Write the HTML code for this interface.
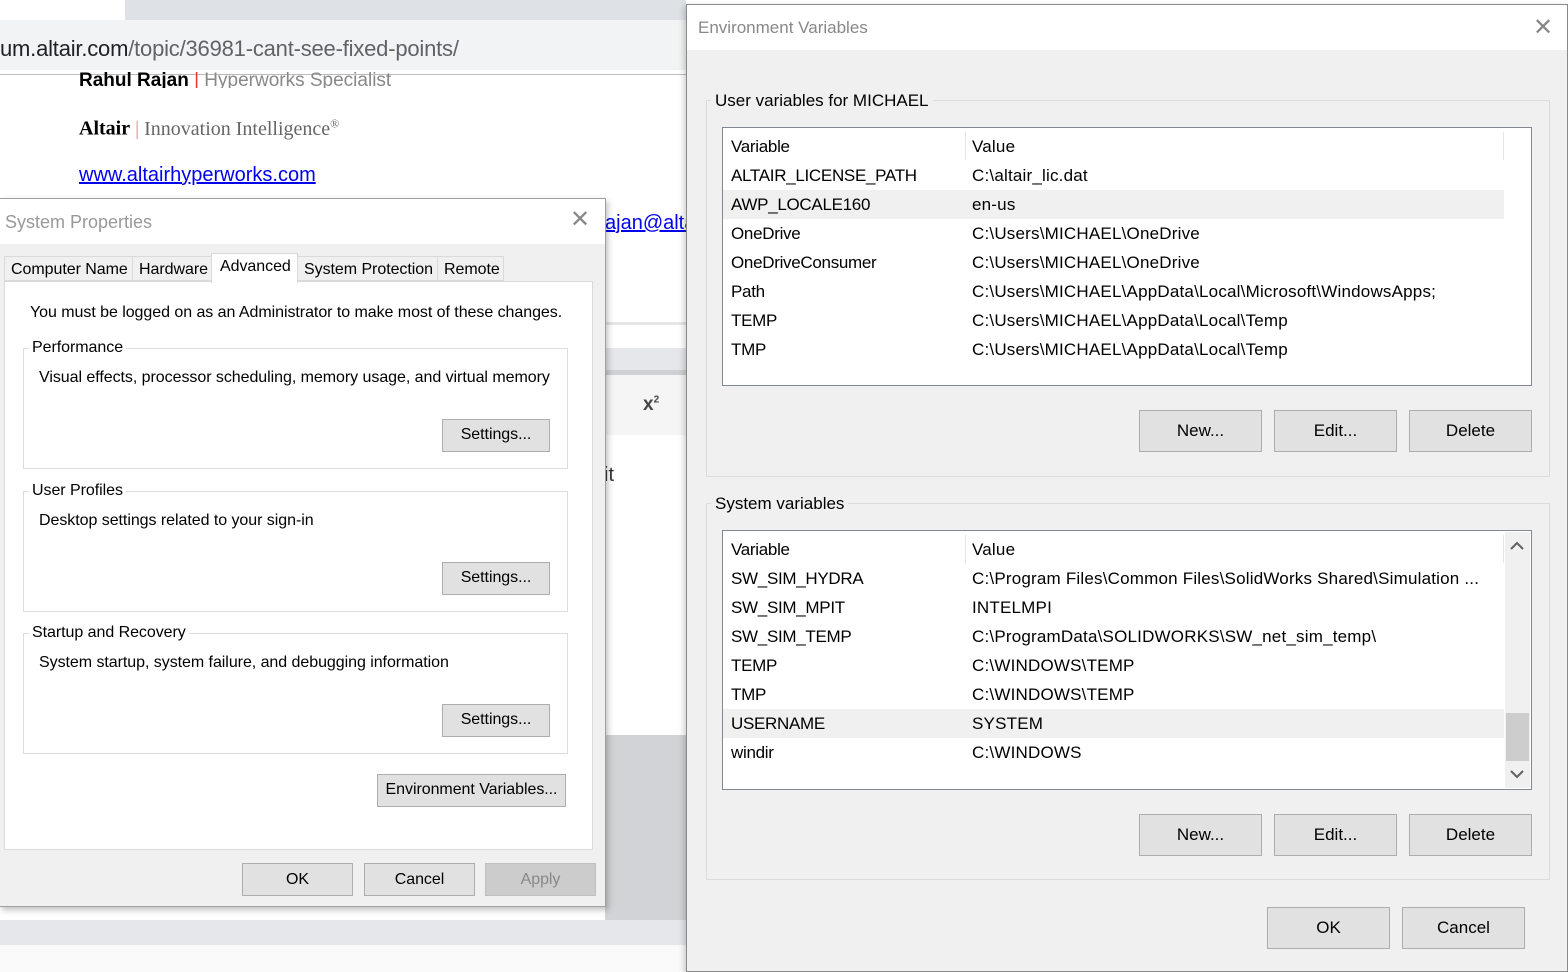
<!DOCTYPE html><html><head><meta charset="utf-8"><style>
*{margin:0;padding:0;box-sizing:border-box}
body{width:1568px;height:972px;position:relative;overflow:hidden;background:#fff;font-family:"Liberation Sans",sans-serif;color:#000}
.a{position:absolute}
.sp{font-size:16px;letter-spacing:-0.05px;white-space:nowrap}
.btn{position:absolute;background:#e1e1e1;border:1px solid #adadad;text-align:center}
.ev{font-size:17px;white-space:nowrap}
.gb{position:absolute;border:1px solid #dcdcdc}
</style></head><body>
<div class="a" style="left:0;top:0;width:686px;height:20px;background:#dee1e6"></div>
<div class="a" style="left:0;top:0;width:125px;height:20px;background:#fff"></div>
<div class="a" style="left:0;top:20px;width:686px;height:50px;background:#f1f3f4"></div>
<div class="a" style="left:0;top:74px;width:686px;height:1px;background:#bbb"></div>
<div class="a" style="left:0;top:36px;font-size:22px;color:#202124;letter-spacing:-0.2px">um.altair.com<span style="color:#5f6368">/topic/36981-cant-see-fixed-points/</span></div>
<div class="a" style="left:79px;top:70px;font-size:19px;font-weight:bold;height:18px;overflow:hidden;line-height:22px">Rahul Rajan <span style="color:#e33;font-weight:normal">|</span> <span style="color:#888;font-weight:normal">Hyperworks Specialist</span></div>
<div class="a" style="left:79px;top:116px;font-family:'Liberation Serif',serif;font-size:20px"><b>Altair</b> <span style="color:#e88">|</span> <span style="color:#666">Innovation Intelligence<sup style="font-size:12px">®</sup></span></div>
<div class="a" style="left:79px;top:164px;font-size:20px;color:#00e;text-decoration:underline">www.altairhyperworks.com</div>
<div class="a" style="left:605px;top:212px;font-size:20px;color:#00e;text-decoration:underline">ajan@alta</div>
<div class="a" style="left:605px;top:322px;width:81px;height:3px;background:#e6e6e6"></div>
<div class="a" style="left:605px;top:348px;width:81px;height:22px;background:#e6e7ea"></div>
<div class="a" style="left:605px;top:370px;width:81px;height:5px;background:#cfd0d3"></div>
<div class="a" style="left:605px;top:375px;width:81px;height:60px;background:#f5f5f5"></div>
<div class="a" style="left:643px;top:394px;font-size:19px;font-weight:bold;color:#444">x<sup style="font-size:10px">2</sup></div>
<div class="a" style="left:604px;top:464px;font-size:20px;color:#333">it</div>
<div class="a" style="left:605px;top:735px;width:81px;height:185px;background:#d2d3d6"></div>
<div class="a" style="left:0;top:920px;width:686px;height:25px;background:#e6e7ea"></div>
<div class="a" style="left:0;top:945px;width:686px;height:27px;background:#fafafa"></div>

<div class="a" style="left:0;top:198px;width:606px;height:709px;background:#f0f0f0;border:1px solid #a0a0a0;border-left:none;box-shadow:2px 3px 6px rgba(0,0,0,.25)">
 <div class="a" style="left:0;top:0;width:605px;height:45px;background:#fff"></div>
 <div class="a" style="left:5px;top:13px;font-size:18px;color:#999">System Properties</div>
 <div class="a" style="left:570px;top:6px;font-size:24px;color:#888">✕</div>
 <div class="a" style="left:4px;top:82px;width:589px;height:569px;background:#fff;border:1px solid #dadada"></div>
 <div class="a sp" style="left:4px;top:57px;width:129px;height:25px;border:1px solid #dadada;background:#f0f0f0;padding:4px 0 0 6px">Computer Name</div>
 <div class="a sp" style="left:132px;top:57px;width:80px;height:25px;border:1px solid #dadada;background:#f0f0f0;padding:4px 0 0 6px">Hardware</div>
 <div class="a sp" style="left:211px;top:54px;width:87px;height:30px;border:1px solid #dadada;border-bottom:none;background:#fff;padding:4px 0 0 8px">Advanced</div>
 <div class="a sp" style="left:297px;top:57px;width:141px;height:25px;border:1px solid #dadada;background:#f0f0f0;padding:4px 0 0 6px">System Protection</div>
 <div class="a sp" style="left:437px;top:57px;width:67px;height:25px;border:1px solid #dadada;background:#f0f0f0;padding:4px 0 0 6px">Remote</div>
 <div class="a sp" style="left:30px;top:105px">You must be logged on as an Administrator to make most of these changes.</div>

 <div class="gb" style="left:23px;top:149px;width:545px;height:121px"></div>
 <div class="a sp" style="left:29px;top:140px;background:#fff;padding:0 3px">Performance</div>
 <div class="a sp" style="left:39px;top:170px">Visual effects, processor scheduling, memory usage, and virtual memory</div>
 <div class="btn sp" style="left:442px;top:220px;width:108px;height:33px;padding-top:6px">Settings...</div>

 <div class="gb" style="left:23px;top:292px;width:545px;height:121px"></div>
 <div class="a sp" style="left:29px;top:283px;background:#fff;padding:0 3px">User Profiles</div>
 <div class="a sp" style="left:39px;top:313px">Desktop settings related to your sign-in</div>
 <div class="btn sp" style="left:442px;top:363px;width:108px;height:33px;padding-top:6px">Settings...</div>

 <div class="gb" style="left:23px;top:434px;width:545px;height:121px"></div>
 <div class="a sp" style="left:29px;top:425px;background:#fff;padding:0 3px">Startup and Recovery</div>
 <div class="a sp" style="left:39px;top:455px">System startup, system failure, and debugging information</div>
 <div class="btn sp" style="left:442px;top:505px;width:108px;height:33px;padding-top:6px">Settings...</div>

 <div class="btn sp" style="left:377px;top:575px;width:189px;height:33px;padding-top:6px">Environment Variables...</div>
 <div class="btn sp" style="left:242px;top:664px;width:111px;height:33px;padding-top:7px">OK</div>
 <div class="btn sp" style="left:364px;top:664px;width:111px;height:33px;padding-top:7px">Cancel</div>
 <div class="btn sp" style="left:485px;top:664px;width:111px;height:33px;padding-top:7px;background:#ccc;border-color:#bfbfbf;color:#888">Apply</div>
</div>

<div class="a" style="left:686px;top:4px;width:882px;height:968px;background:#f0f0f0;border:1px solid #8a8a8a;box-shadow:-2px 2px 6px rgba(0,0,0,.2)">
 <div class="a" style="left:0;top:0;width:880px;height:45px;background:#fff"></div>
 <div class="a ev" style="left:11px;top:13px;color:#888">Environment Variables</div>
 <div class="a" style="left:846px;top:8px;font-size:24px;color:#888">✕</div>

 <div class="gb" style="left:19px;top:95px;width:844px;height:377px"></div>
 <div class="a ev" style="left:24px;top:86px;background:#f0f0f0;padding:0 4px">User variables for MICHAEL</div>
 <div class="a" style="left:35px;top:122px;width:810px;height:259px;background:#fff;border:1px solid #828790">
  <div class="a" style="left:242px;top:4px;width:1px;height:28px;background:#e5e5e5"></div>
  <div class="a" style="left:780px;top:4px;width:1px;height:28px;background:#e5e5e5"></div>
  <div class="a" style="left:0;top:62px;width:781px;height:29px;background:#f0f0f0"></div>
 </div>
 <div class="a ev" style="left:44px;top:127px;line-height:29px;letter-spacing:-0.3px">Variable<br>ALTAIR_LICENSE_PATH<br>AWP_LOCALE160<br>OneDrive<br>OneDriveConsumer<br>Path<br>TEMP<br>TMP</div>
 <div class="a ev" style="left:285px;top:127px;line-height:29px;letter-spacing:0.2px">Value<br>C:\altair_lic.dat<br>en-us<br>C:\Users\MICHAEL\OneDrive<br>C:\Users\MICHAEL\OneDrive<br>C:\Users\MICHAEL\AppData\Local\Microsoft\WindowsApps;<br>C:\Users\MICHAEL\AppData\Local\Temp<br>C:\Users\MICHAEL\AppData\Local\Temp</div>
 <div class="btn ev" style="left:452px;top:405px;width:123px;height:42px;padding-top:10px">New...</div>
 <div class="btn ev" style="left:587px;top:405px;width:123px;height:42px;padding-top:10px">Edit...</div>
 <div class="btn ev" style="left:722px;top:405px;width:123px;height:42px;padding-top:10px">Delete</div>

 <div class="gb" style="left:19px;top:498px;width:844px;height:377px"></div>
 <div class="a ev" style="left:24px;top:489px;background:#f0f0f0;padding:0 4px">System variables</div>
 <div class="a" style="left:35px;top:525px;width:810px;height:260px;background:#fff;border:1px solid #828790">
  <div class="a" style="left:242px;top:4px;width:1px;height:28px;background:#e5e5e5"></div>
  <div class="a" style="left:780px;top:4px;width:1px;height:28px;background:#e5e5e5"></div>
  <div class="a" style="left:0;top:178px;width:781px;height:29px;background:#f0f0f0"></div>
  <div class="a" style="left:782px;top:1px;width:25px;height:256px;background:#f0f0f0"></div>
  <div class="a" style="left:783px;top:182px;width:23px;height:48px;background:#cdcdcd"></div>
  <svg class="a" style="left:786px;top:10px" width="16" height="10"><path d="M2 8 L8 2 L14 8" stroke="#606060" stroke-width="2" fill="none"/></svg>
  <svg class="a" style="left:786px;top:238px" width="16" height="10"><path d="M2 2 L8 8 L14 2" stroke="#606060" stroke-width="2" fill="none"/></svg>
 </div>
 <div class="a ev" style="left:44px;top:530px;line-height:29px;letter-spacing:-0.3px">Variable<br>SW_SIM_HYDRA<br>SW_SIM_MPIT<br>SW_SIM_TEMP<br>TEMP<br>TMP<br>USERNAME<br>windir</div>
 <div class="a ev" style="left:285px;top:530px;line-height:29px;letter-spacing:0.2px">Value<br>C:\Program Files\Common Files\SolidWorks Shared\Simulation ...<br>INTELMPI<br>C:\ProgramData\SOLIDWORKS\SW_net_sim_temp\<br>C:\WINDOWS\TEMP<br>C:\WINDOWS\TEMP<br>SYSTEM<br>C:\WINDOWS</div>
 <div class="btn ev" style="left:452px;top:809px;width:123px;height:42px;padding-top:10px">New...</div>
 <div class="btn ev" style="left:587px;top:809px;width:123px;height:42px;padding-top:10px">Edit...</div>
 <div class="btn ev" style="left:722px;top:809px;width:123px;height:42px;padding-top:10px">Delete</div>

 <div class="btn ev" style="left:580px;top:902px;width:123px;height:42px;padding-top:10px">OK</div>
 <div class="btn ev" style="left:715px;top:902px;width:123px;height:42px;padding-top:10px">Cancel</div>
</div>
</body></html>
